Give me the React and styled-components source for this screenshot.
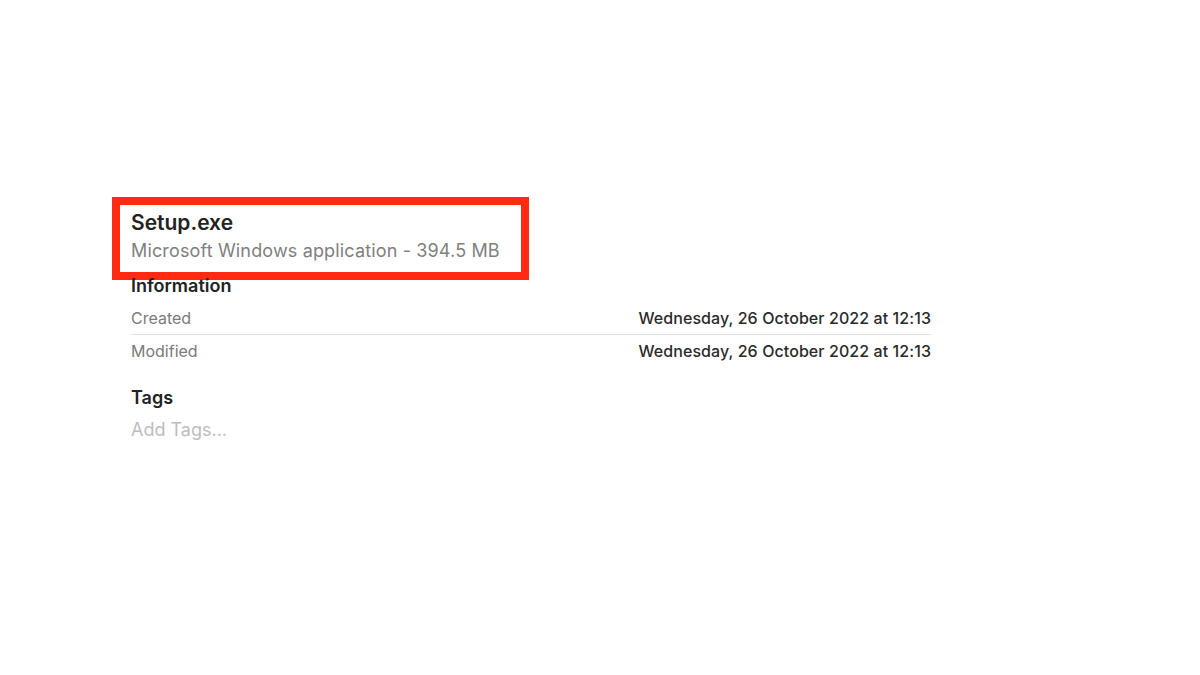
import React from 'react'
import styled, {createGlobalStyle} from 'styled-components'

const Global = createGlobalStyle`
  html, body {
    margin: 0;
    background: #ffffff;
    font-family: "Inter", "Liberation Sans", sans-serif;
  }
`

const Page = styled.div`
  width: 1200px;
  height: 675px;
  padding: 197px 0 0 112px;
  box-sizing: border-box;
`

const Panel = styled.div`
  width: 819px;
  display: flex;
  flex-direction: column;
`

const Highlight = styled.div`
  align-self: flex-start;
  border: 8px solid #ff2a12;
  padding: 3px 21px 7px 11px;
  margin-bottom: -4px;
`

const FileName = styled.div`
  font-size: 21px;
  font-weight: 600;
  color: #222222;
  line-height: 29px;
`

const Kind = styled.div`
  font-size: 18px;
  letter-spacing: 0.15px;
  color: #808080;
  line-height: 28px;
`

const Section = styled.div`
  padding-left: 19px;
  display: flex;
  flex-direction: column;
`

const Heading = styled.div`
  font-size: 18px;
  font-weight: 600;
  color: #222222;
  line-height: 20px;
  margin-top: ${p => p.$top || 0}px;
`

const Rows = styled.div`
  margin-top: 6px;
`

const Row = styled.div`
  display: flex;
  justify-content: space-between;
  align-items: center;
  height: 32px;
  border-bottom: ${p => (p.$line ? '1px solid #e2e2e2' : 'none')};
  font-size: 16px;
`

const Label = styled.span`
  color: #7a7a7a;
`

const Value = styled.span`
  color: #2a2a2a;
  font-weight: 500;
  letter-spacing: 0.08px;
`

const Placeholder = styled.div`
  font-size: 18px;
  color: #bdbdbd;
  line-height: 24px;
  margin-top: 10px;
`

export default function App() {
  return (
    <Page>
      <Global />
      <Panel>
        <Highlight>
          <FileName>Setup.exe</FileName>
          <Kind>Microsoft Windows application - 394.5 MB</Kind>
        </Highlight>
        <Section>
          <Heading>Information</Heading>
          <Rows>
            <Row $line>
              <Label>Created</Label>
              <Value>Wednesday, 26 October 2022 at 12:13</Value>
            </Row>
            <Row>
              <Label>Modified</Label>
              <Value>Wednesday, 26 October 2022 at 12:13</Value>
            </Row>
          </Rows>
          <Heading $top={21}>Tags</Heading>
          <Placeholder>Add Tags...</Placeholder>
        </Section>
      </Panel>
    </Page>
  )
}
